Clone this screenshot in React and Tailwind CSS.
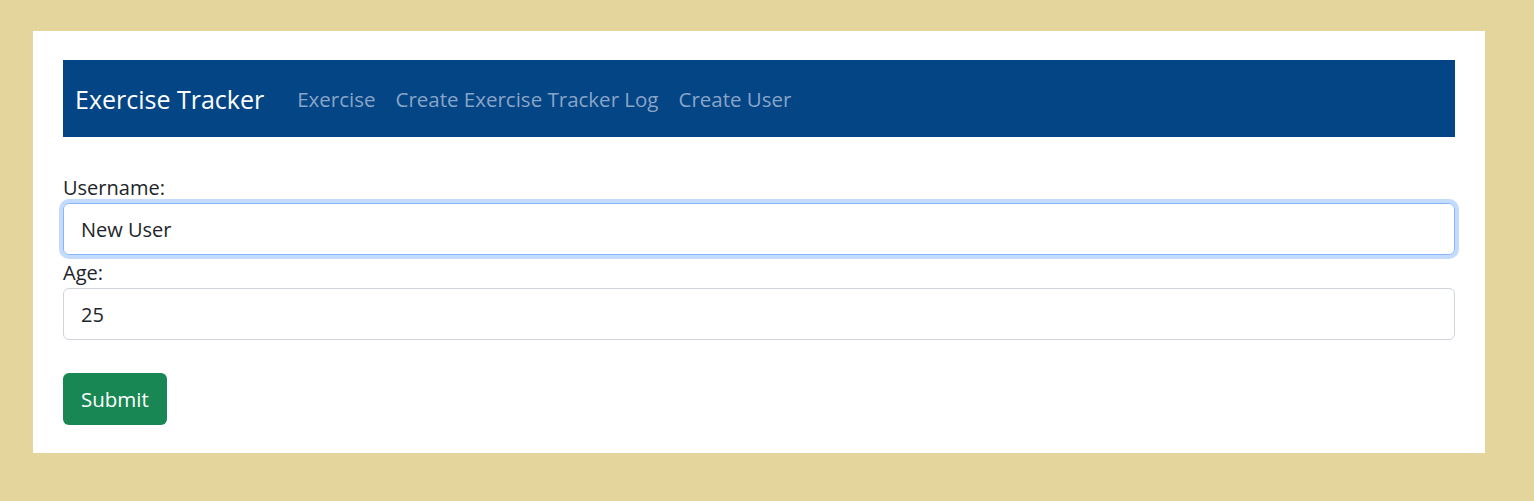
import React, { useState } from 'react';

const App = () => {
  const [form, setForm] = useState({ username: 'New User', age: '25' });

  return (
    <div className="min-h-screen bg-[#e3d59c] pl-[33px] pr-[49px] pt-[31px] pb-[48px] font-['Open_Sans',sans-serif] text-[#212529]">
      <div className="bg-white px-[30px] pt-[29px] pb-[28px]">
        <nav className="flex items-center h-[77px] bg-[#044586] pl-[12px] pt-[2px]">
          <span className="text-[25px] text-white mr-[23px]">Exercise Tracker</span>
          <div className="flex items-center text-[20.5px] text-[#8aa4c6]">
            <a className="px-[10px]">Exercise</a>
            <a className="px-[10px]">Create Exercise Tracker Log</a>
            <a className="px-[10px]">Create User</a>
          </div>
        </nav>

        <form className="mt-[36px]" onSubmit={(e) => e.preventDefault()}>
          <div>
            <label className="block text-[20px] leading-[30px]">Username:</label>
            <input
              type="text"
              className="block w-full h-[52px] px-[17px] text-[20px] rounded-[6px] border border-[#86b7fe] outline-none ring-4 ring-[#0d6efd]/25"
              value={form.username}
              onChange={(e) => setForm({ ...form, username: e.target.value })}
            />
          </div>
          <div className="mt-[3px]">
            <label className="block text-[20px] leading-[30px]">Age:</label>
            <input
              type="text"
              className="block w-full h-[52px] px-[17px] text-[20px] rounded-[6px] border border-[#ced4da] outline-none"
              value={form.age}
              onChange={(e) => setForm({ ...form, age: e.target.value })}
            />
          </div>
          <button
            type="submit"
            className="mt-[33px] h-[52px] px-[18px] rounded-[6px] bg-[#198754] text-white text-[20.5px]"
          >
            Submit
          </button>
        </form>
      </div>
    </div>
  );
};

export default App;
